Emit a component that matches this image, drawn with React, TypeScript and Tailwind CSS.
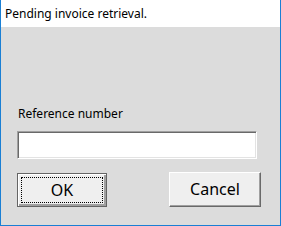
export default function App() {
  const font = { fontFamily: '"Noto Sans", "Open Sans", sans-serif' };
  return (
    <div
      style={font}
      className="w-[281px] h-[226px] flex flex-col bg-[#dcdcdc] border-x border-b border-[#1a7fd4] text-black"
    >
      <div className="h-[27px] bg-white flex items-center pl-[4px] text-[12px] leading-none">
        Pending invoice retrieval.
      </div>
      <div className="flex-1 flex flex-col pt-[79px] pl-[16px] pr-[19px]">
        <label className="text-[12px] leading-[16px] ml-[1px]">Reference number</label>
        <input
          type="text"
          className="mt-[9px] w-[240px] h-[28px] bg-white outline-none border border-t-[#a0a0a0] border-l-[#a0a0a0] border-b-white border-r-white shadow-[inset_1px_1px_0_#696969,inset_-1px_-1px_0_#e3e3e3]"
        />
        <div className="mt-[13px] flex justify-between">
          <button className="w-[90px] h-[34px] mt-[1px] bg-[#efefef] border border-[#646464] shadow-[inset_1px_1px_0_#fff,inset_-1px_-1px_0_#a0a0a0,inset_-2px_-2px_0_#a0a0a0] p-[3px]">
            <span className="w-full h-full flex items-center justify-center border border-dotted border-black text-[16px] leading-none pb-[1px]">
              OK
            </span>
          </button>
          <button className="w-[92px] h-[35px] bg-[#efefef] border border-t-white border-l-white border-b-[#696969] border-r-[#696969] shadow-[inset_-1px_-1px_0_#a0a0a0] flex items-center justify-center text-[16px] leading-none pb-[1px]">
            Cancel
          </button>
        </div>
      </div>
    </div>
  );
}
